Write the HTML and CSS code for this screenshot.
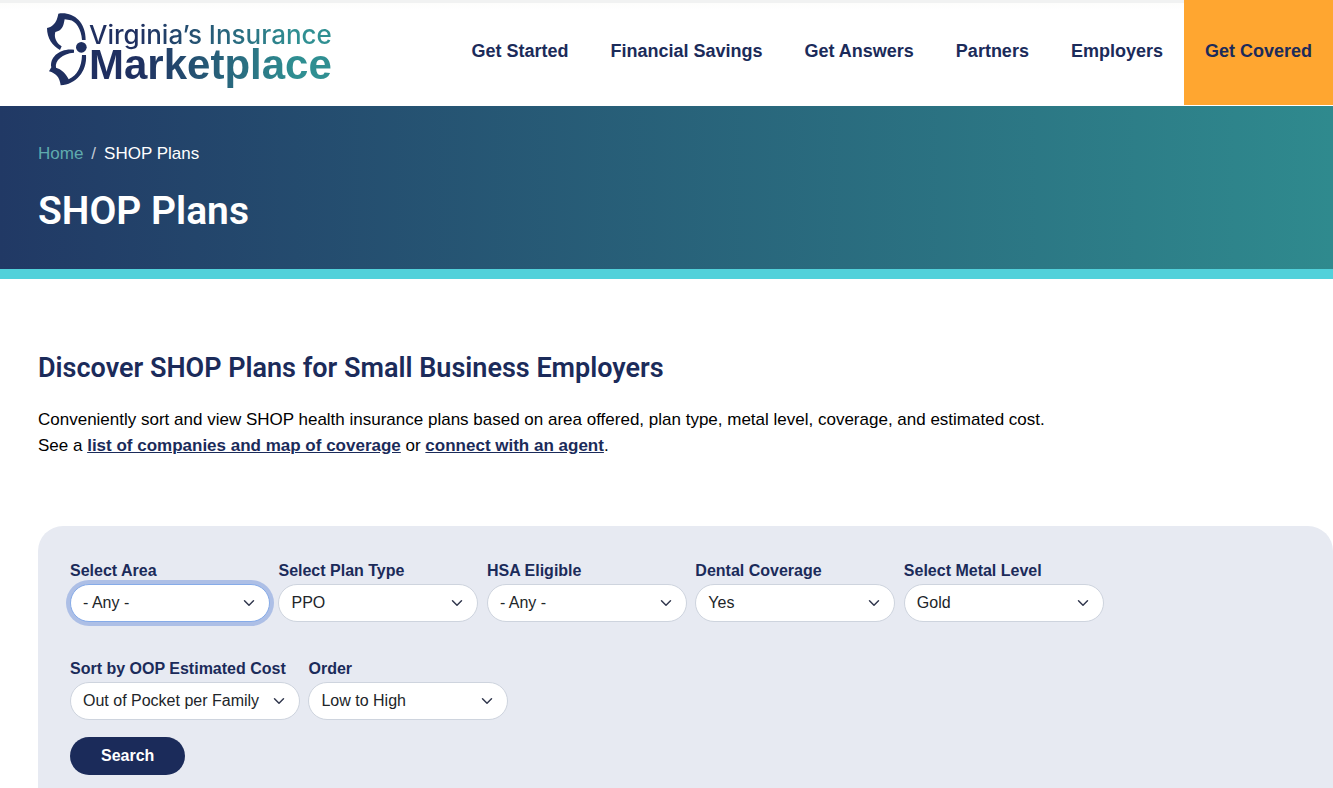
FILE: index.html
```html
<!DOCTYPE html>
<html lang="en">
  <head>
    <meta charset="utf-8" />
    <meta name="viewport" content="width=device-width, initial-scale=1" />
    <title>SHOP Plans | Virginia's Insurance Marketplace</title>
    <link rel="stylesheet" href="styles.css">
  </head>
  <body>
    <header class="site-header">
      <a class="logo" href="#">
        <svg class="logo-mark" viewBox="51 36 126 222" aria-hidden="true">
          <path d="M90 150C68 138 51 116 51 84C67 80 80 70 85 41C126 34 167 62 167 120L156 120C154 88 138 62 118 60L104 58C100 80 96 92 76 96C71 114 80 130 95 139Z" />
          <path d="M132 149C92 143 58 170 64 202L57 214C78 220 89 232 92 256C137 254 172 214 168 165L156 165C155 200 142 226 116 238C106 218 94 208 78 203C74 182 97 160 132 158Z" />
          <circle cx="154" cy="142" r="16" />
        </svg>
        <span class="logo-text">
          <span class="logo-top">Virginia’s Insurance</span>
          <span class="logo-bottom">Marketplace</span>
        </span>
      </a>
      <nav class="main-nav">
        <a href="#">Get Started</a>
        <a href="#">Financial Savings</a>
        <a href="#">Get Answers</a>
        <a href="#">Partners</a>
        <a href="#">Employers</a>
        <a class="nav-cta" href="#">Get Covered</a>
      </nav>
    </header>

    <section class="hero">
      <nav class="breadcrumb" aria-label="Breadcrumb">
        <a href="#">Home</a>
        <span class="divider">/</span>
        <span>SHOP Plans</span>
      </nav>
      <h1>SHOP Plans</h1>
    </section>

    <main class="content">
      <h2>Discover SHOP Plans for Small Business Employers</h2>
      <p class="intro">
        Conveniently sort and view SHOP health insurance plans based on area offered, plan type, metal level, coverage, and estimated cost.<br>
        See a <a href="#">list of companies and map of coverage</a> or <a href="#">connect with an agent</a>.
      </p>

      <form class="filters">
        <div class="filter-row">
          <div class="form-item">
            <label for="area">Select Area</label>
            <select id="area" class="focused">
              <option>- Any -</option>
            </select>
          </div>
          <div class="form-item">
            <label for="plan-type">Select Plan Type</label>
            <select id="plan-type">
              <option>PPO</option>
            </select>
          </div>
          <div class="form-item">
            <label for="hsa">HSA Eligible</label>
            <select id="hsa">
              <option>- Any -</option>
            </select>
          </div>
          <div class="form-item">
            <label for="dental">Dental Coverage</label>
            <select id="dental">
              <option>Yes</option>
            </select>
          </div>
          <div class="form-item">
            <label for="metal">Select Metal Level</label>
            <select id="metal">
              <option>Gold</option>
            </select>
          </div>
        </div>
        <div class="filter-row">
          <div class="form-item wide">
            <label for="sort">Sort by OOP Estimated Cost</label>
            <select id="sort">
              <option>Out of Pocket per Family</option>
            </select>
          </div>
          <div class="form-item">
            <label for="order">Order</label>
            <select id="order">
              <option>Low to High</option>
            </select>
          </div>
        </div>
        <button type="submit">Search</button>
      </form>
    </main>
  </body>
</html>
```
FILE: styles.css
```css
* {
  margin: 0;
  padding: 0;
  box-sizing: border-box;
}

body {
  font-family: "Liberation Sans", Arial, sans-serif;
  font-size: 16px;
  line-height: 24px;
  color: #000;
  background: #fff;
}

/* Header */
.site-header {
  display: flex;
  justify-content: space-between;
  height: 106px;
  padding-bottom: 1px;
  background: linear-gradient(#f1f2f2 3px, #fdfdfc 3px, #fff 10px);
}

.logo {
  display: flex;
  align-items: flex-start;
  padding: 12px 0 0 47px;
  text-decoration: none;
}

.logo-mark {
  width: 42px;
  height: 74px;
  fill: #1f2f60;
}

.logo-text {
  display: flex;
  flex-direction: column;
  padding-top: 8px;
  white-space: nowrap;
  color: transparent;
  background: linear-gradient(90deg, #1f2f60 20%, #2f8f92 85%);
  background-clip: text;
  -webkit-background-clip: text;
}

.logo-top {
  font-family: Inter, sans-serif;
  font-size: 26px;
  font-weight: 500;
  line-height: 30px;
}

.logo-bottom {
  font-size: 42px;
  font-weight: 700;
  line-height: 30px;
  padding-bottom: 12px;
}

.main-nav {
  display: flex;
  align-items: stretch;
}

.main-nav a {
  display: flex;
  align-items: center;
  padding: 0 21px 4px;
  font-size: 18px;
  font-weight: 700;
  white-space: nowrap;
  color: #1b2b5a;
  text-decoration: none;
}

.main-nav .nav-cta {
  background: #ffa630;
}

/* Page banner */
.hero {
  padding: 36px 38px 33px;
  color: #fff;
  background: linear-gradient(90deg, #213965, #2f8a8e);
  border-bottom: 10px solid #51d1da;
}

.breadcrumb {
  display: flex;
  gap: 8px;
  margin-bottom: 20px;
  font-size: 17px;
}

.breadcrumb a {
  color: #5fabae;
  text-decoration: none;
}

.breadcrumb .divider {
  color: #c3cbd6;
}

h1,
h2 {
  font-family: Roboto, sans-serif;
  font-weight: 600;
}

h1 {
  font-size: 39px;
  line-height: 50px;
}

/* Content */
.content {
  padding: 72px 0 0 38px;
}

h2 {
  font-size: 27px;
  line-height: 34px;
  margin-bottom: 22px;
  color: #1b2b5a;
}

.intro {
  font-size: 17px;
  line-height: 26px;
  margin-bottom: 67px;
}

.intro a {
  font-weight: 700;
  color: #1b2b5a;
}

/* Filters */
.filters {
  min-height: 280px;
  padding: 32px 32px 40px;
  background: #e7eaf2;
  border-radius: 25px;
}

.filter-row {
  margin-bottom: 34px;
}

.filter-row + .filter-row {
  margin-bottom: 17px;
}

.form-item {
  display: inline-block;
  width: 200px;
  margin-right: 4px;
  vertical-align: top;
}

.form-item.wide {
  width: 230px;
}

label {
  display: block;
  font-weight: 700;
  line-height: 26px;
  white-space: nowrap;
  color: #1b2b5a;
}

select {
  display: block;
  width: 100%;
  height: 38px;
  padding: 0 36px 0 12px;
  font: inherit;
  color: #212529;
  appearance: none;
  background: #fff url("data:image/svg+xml,%3csvg xmlns='http://www.w3.org/2000/svg' viewBox='0 0 16 16'%3e%3cpath fill='none' stroke='%23343a50' stroke-linecap='round' stroke-linejoin='round' stroke-width='2' d='m2 5 6 6 6-6'/%3e%3c/svg%3e") no-repeat right 14px center / 12px 12px;
  border: 1px solid #ced4de;
  border-radius: 20px;
}

select:focus,
select.focused {
  border-color: #86abe8;
  outline: 0;
  box-shadow: 0 0 0 4px #adbfe6;
}

button {
  height: 38px;
  padding: 0 31px;
  font: inherit;
  font-weight: 700;
  color: #fff;
  background: #1b2b5a;
  border: 0;
  border-radius: 20px;
}
```
